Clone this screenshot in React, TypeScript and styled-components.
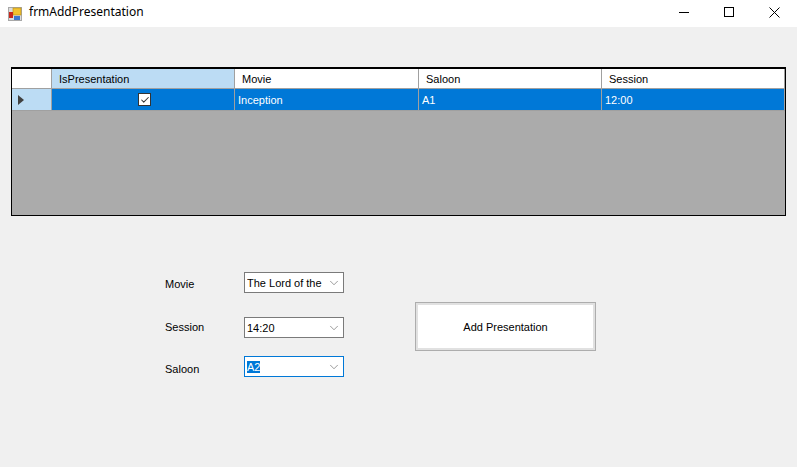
import React from 'react';
import styled, { createGlobalStyle } from 'styled-components';
import { Check, ChevronDown } from 'lucide-react';

const GlobalStyle = createGlobalStyle`
  html, body {
    margin: 0;
    padding: 0;
    background: #f0f0f0;
  }
  body {
    font-family: "Liberation Sans", Arial, sans-serif;
    font-size: 11px;
    color: #000;
  }
`;

const Window = styled.div`
  width: 797px;
  height: 467px;
  overflow: hidden;
  background: #f0f0f0;
`;

const TitleBar = styled.header`
  height: 27px;
  background: #fff;
  display: flex;
  align-items: center;
  padding-left: 8px;
`;

const TitleText = styled.span`
  font-family: "Noto Sans", sans-serif;
  font-size: 12px;
  margin-left: 7px;
  flex: 1;
  position: relative;
  top: -2px;
`;

const WindowButtons = styled.div`
  display: flex;
  align-self: flex-start;
  height: 24px;
`;

const WindowButton = styled.div`
  width: 45px;
  height: 24px;
  display: flex;
  align-items: center;
  justify-content: center;
`;

const Grid = styled.div`
  margin: 40px 11px 0 11px;
  height: 146px;
  border: 2px solid #000;
  border-right-width: 1px;
  border-bottom-width: 1px;
  border-left-width: 1px;
  background: #ababab;
  display: flex;
  flex-direction: column;
`;

const Row = styled.div<{ $height: number }>`
  display: grid;
  grid-template-columns: 40px 183px 184px 183px 183px;
  height: ${(p) => p.$height}px;
`;

const HeaderCell = styled.div<{ $active?: boolean; $pad?: number }>`
  background: ${(p) => (p.$active ? '#bcdcf4' : '#fff')};
  border-right: 1px solid #a0a0a0;
  border-bottom: 1px solid #a0a0a0;
  padding-left: ${(p) => p.$pad ?? 7}px;
  display: flex;
  align-items: center;
  font-size: 11px;
  color: #000;
`;

const RowHeader = styled.div`
  background: #bcdcf4;
  border-right: 1px solid #a0a0a0;
  border-bottom: 1px solid #a0a0a0;
  display: flex;
  align-items: center;
  padding-left: 6px;
`;

const Arrow = styled.div`
  width: 0;
  height: 0;
  border-top: 5px solid transparent;
  border-bottom: 5px solid transparent;
  border-left: 6px solid #404040;
`;

const Cell = styled.div<{ $center?: boolean }>`
  background: #0078d7;
  color: #fff;
  border-right: 1px solid #a0a0a0;
  border-bottom: 1px solid #a0a0a0;
  padding-left: 3px;
  display: flex;
  align-items: center;
  justify-content: ${(p) => (p.$center ? 'center' : 'flex-start')};
  font-size: 11px;
`;

const CheckBox = styled.div`
  width: 11px;
  height: 11px;
  border: 1px solid #333;
  background: #fff;
  display: flex;
  align-items: center;
  justify-content: center;
  color: #333;
`;

const FormArea = styled.section`
  display: flex;
  align-items: flex-start;
  margin: 56px 0 0 165px;
`;

const Fields = styled.div`
  display: flex;
  flex-direction: column;
  width: 179px;
`;

const Field = styled.div<{ $top: number }>`
  display: flex;
  height: 21px;
  margin-top: ${(p) => p.$top}px;
`;

const FieldLabel = styled.label<{ $shift: number }>`
  width: 79px;
  font-size: 11px;
  line-height: 21px;
  padding-top: ${(p) => p.$shift}px;
  color: #000;
`;

const Combo = styled.div<{ $focused?: boolean }>`
  width: 100px;
  height: 21px;
  box-sizing: border-box;
  border: 1px solid ${(p) => (p.$focused ? '#0078d7' : '#7a7a7a')};
  background: #fff;
  display: flex;
  align-items: center;
  padding-left: 2px;
  font-size: 11px;
  position: relative;
`;

const ComboText = styled.span<{ $selected?: boolean }>`
  flex: 1;
  white-space: nowrap;
  overflow: hidden;
  line-height: 14px;
`;

const Selection = styled.span`
  background: #0078d7;
  color: #fff;
`;

const ComboArrow = styled.div`
  width: 17px;
  flex: none;
  display: flex;
  align-items: center;
  justify-content: center;
  color: #555;
  margin-right: 1px;
`;

const AddButton = styled.button`
  margin: 30px 0 0 71px;
  width: 181px;
  height: 49px;
  box-sizing: border-box;
  background: #fff;
  border: 1px solid #adadad;
  outline: 2px solid #e1e1e1;
  outline-offset: -3px;
  font-family: inherit;
  font-size: 11px;
  color: #000;
  padding: 0;
`;

const columns = ['Movie', 'Saloon', 'Session'];

const App = () => {
  return (
    <Window>
      <GlobalStyle />
      <TitleBar>
        <svg width="14" height="14" viewBox="0 0 14 14">
          <rect x="0.5" y="0.5" width="13" height="13" fill="#dcdcdc" stroke="#a8a8a8" />
          <rect x="5" y="1" width="8" height="7" fill="#f2c230" stroke="#b58a10" strokeWidth="0.6" />
          <rect x="1" y="5" width="4" height="6" fill="#c8281e" />
          <rect x="6" y="9" width="6" height="4" fill="#3c78d0" />
        </svg>
        <TitleText>frmAddPresentation</TitleText>
        <WindowButtons>
          <WindowButton>
            <svg width="11" height="11" viewBox="0 0 11 11">
              <path d="M0 5.5H10" stroke="#000" strokeWidth="1" />
            </svg>
          </WindowButton>
          <WindowButton>
            <svg width="11" height="11" viewBox="0 0 11 11">
              <rect x="0.5" y="0.5" width="9" height="9" fill="none" stroke="#000" />
            </svg>
          </WindowButton>
          <WindowButton>
            <svg width="11" height="11" viewBox="0 0 11 11">
              <path d="M0.5 0.5L10.5 10.5M10.5 0.5L0.5 10.5" stroke="#000" strokeWidth="1" />
            </svg>
          </WindowButton>
        </WindowButtons>
      </TitleBar>

      <Grid>
        <Row $height={20}>
          <HeaderCell />
          <HeaderCell $active>IsPresentation</HeaderCell>
          {columns.map((c) => (
            <HeaderCell key={c}>{c}</HeaderCell>
          ))}
        </Row>
        <Row $height={22}>
          <RowHeader>
            <Arrow />
          </RowHeader>
          <Cell $center>
            <CheckBox>
              <Check size={10} strokeWidth={2.5} />
            </CheckBox>
          </Cell>
          <Cell>Inception</Cell>
          <Cell>A1</Cell>
          <Cell>12:00</Cell>
        </Row>
      </Grid>

      <FormArea>
        <Fields>
          <Field $top={0}>
            <FieldLabel $shift={2}>Movie</FieldLabel>
            <Combo>
              <ComboText>The Lord of the</ComboText>
              <ComboArrow>
                <ChevronDown size={14} strokeWidth={1} />
              </ComboArrow>
            </Combo>
          </Field>
          <Field $top={24}>
            <FieldLabel $shift={0}>Session</FieldLabel>
            <Combo>
              <ComboText>14:20</ComboText>
              <ComboArrow>
                <ChevronDown size={14} strokeWidth={1} />
              </ComboArrow>
            </Combo>
          </Field>
          <Field $top={18}>
            <FieldLabel $shift={3}>Saloon</FieldLabel>
            <Combo $focused>
              <ComboText>
                <Selection>A2</Selection>
              </ComboText>
              <ComboArrow>
                <ChevronDown size={14} strokeWidth={1} />
              </ComboArrow>
            </Combo>
          </Field>
        </Fields>
        <AddButton>Add Presentation</AddButton>
      </FormArea>
    </Window>
  );
};

export default App;
